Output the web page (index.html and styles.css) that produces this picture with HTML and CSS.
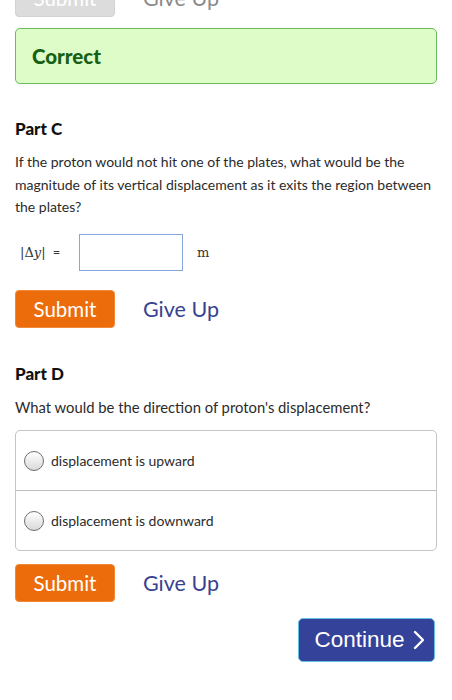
FILE: index.html
```html
<!DOCTYPE html>
<html>
<head>
<meta charset="utf-8">
<link rel="stylesheet" href="styles.css">
</head>
<body>
<div class="page">
  <div class="actions actions-top">
    <button class="btn btn-disabled">Submit</button>
    <span class="giveup giveup-disabled">Give Up</span>
  </div>
  <div class="feedback">Correct</div>

  <h2 class="part part-c">Part C</h2>
  <p class="question q-c">If the proton would not hit one of the plates, what would be the magnitude of its vertical displacement as it exits the region between the plates?</p>
  <div class="answer-row">
    <span class="math"><span class="bar">|</span>Δ<i>y</i><span class="bar">|</span> <span class="eq">=</span></span>
    <span class="input"></span>
    <span class="unit">m</span>
  </div>
  <div class="actions">
    <button class="btn btn-submit">Submit</button>
    <span class="giveup">Give Up</span>
  </div>

  <h2 class="part part-d">Part D</h2>
  <p class="question q-d">What would be the direction of proton's displacement?</p>
  <div class="options">
    <div class="option"><span class="radio"></span><span class="opt-label">displacement is upward</span></div>
    <div class="option"><span class="radio"></span><span class="opt-label">displacement is downward</span></div>
  </div>
  <div class="actions actions-d">
    <button class="btn btn-submit">Submit</button>
    <span class="giveup">Give Up</span>
  </div>

  <div class="continue-row">
    <button class="continue">Continue
      <svg class="chev" width="12" height="20" viewBox="0 0 12 20"><path d="M2 2 L10 10 L2 18" fill="none" stroke="#fff" stroke-width="2.4" stroke-linecap="round" stroke-linejoin="round"/></svg>
    </button>
  </div>
</div>
</body>
</html>
```
FILE: styles.css
```css
html, body {
  margin: 0;
  padding: 0;
  background: #fff;
}
body {
  font-family: Lato, "Open Sans", sans-serif;
  color: #2b2b2b;
  overflow: hidden;
}
.page {
  padding: 0 15px;
  width: 422px;
}
.actions {
  display: flex;
  align-items: center;
  gap: 28px;
}
.actions-top {
  margin-top: -21px;
}
.btn {
  width: 100px;
  height: 38px;
  border-radius: 4px;
  font-family: Lato, sans-serif;
  font-size: 20.5px;
  color: #fff;
  padding: 0;
  box-sizing: border-box;
}
.btn-disabled {
  background: #dcdcdc;
  border: 1px solid #d2d2d2;
}
.btn-submit {
  background: #ec6c0b;
  border: 1px solid #f0893a;
}
.giveup {
  font-size: 21.5px;
  color: #38438f;
}
.giveup-disabled {
  color: #8a8a8a;
}
.feedback {
  margin-top: 11px;
  height: 56px;
  box-sizing: border-box;
  background: #ddfcc8;
  border: 1px solid #6cb95e;
  border-radius: 5px;
  padding-left: 16px;
  display: flex;
  align-items: center;
  font-weight: 900;
  font-size: 20.5px;
  color: #175f13;
}
.part {
  margin: 0;
  font-size: 17px;
  font-weight: 900;
  color: #111;
  line-height: 20px;
}
.part-c {
  margin-top: 35px;
}
.part-d {
  margin-top: 36px;
}
.question {
  margin: 0;
  font-size: 14px;
  line-height: 22.5px;
  color: #2b2b2b;
}
.q-c {
  margin-top: 12px;
}
.q-d {
  margin-top: 12px;
  font-size: 14.8px;
}
.answer-row {
  display: flex;
  align-items: center;
  margin-top: 15px;
  height: 37px;
}
.math {
  font-family: "DejaVu Serif", "Liberation Serif", serif;
  font-size: 13px;
  color: #333;
  margin-left: 5px;
  width: 59px;
}
.math .eq {
  font-family: Lato, sans-serif;
  margin-left: 3px;
}
.input {
  width: 104px;
  height: 37px;
  box-sizing: border-box;
  border: 1px solid #86a6dc;
}
.unit {
  font-family: "DejaVu Serif", "Liberation Serif", serif;
  font-size: 13px;
  margin-left: 14px;
  color: #333;
}
.answer-row + .actions {
  margin-top: 19px;
}
.options {
  margin-top: 12px;
  border: 1px solid #c4c4c4;
  border-radius: 5px;
}
.option {
  height: 59px;
  display: flex;
  align-items: center;
  padding-left: 8px;
}
.option + .option {
  border-top: 1px solid #bdbdbd;
}
.radio {
  width: 20px;
  height: 20px;
  box-sizing: border-box;
  border-radius: 50%;
  border: 1px solid #6f6f6f;
  background: linear-gradient(#ffffff, #d9d9d9);
  margin-right: 7px;
}
.opt-label {
  font-size: 14px;
  color: #2b2b2b;
}
.actions-d {
  margin-top: 13px;
}
.continue-row {
  display: flex;
  justify-content: flex-end;
  margin-top: 16px;
  padding-right: 2px;
}
.continue {
  width: 137px;
  height: 44px;
  box-sizing: border-box;
  background: #35429a;
  border: 1px solid #62c3e3;
  border-radius: 5px;
  color: #fff;
  font-family: "Liberation Sans", Arial, sans-serif;
  font-size: 22.5px;
  display: flex;
  align-items: center;
  justify-content: center;
  gap: 8px;
  padding: 0 0 0 6px;
}
.chev {
  display: block;
}
```
